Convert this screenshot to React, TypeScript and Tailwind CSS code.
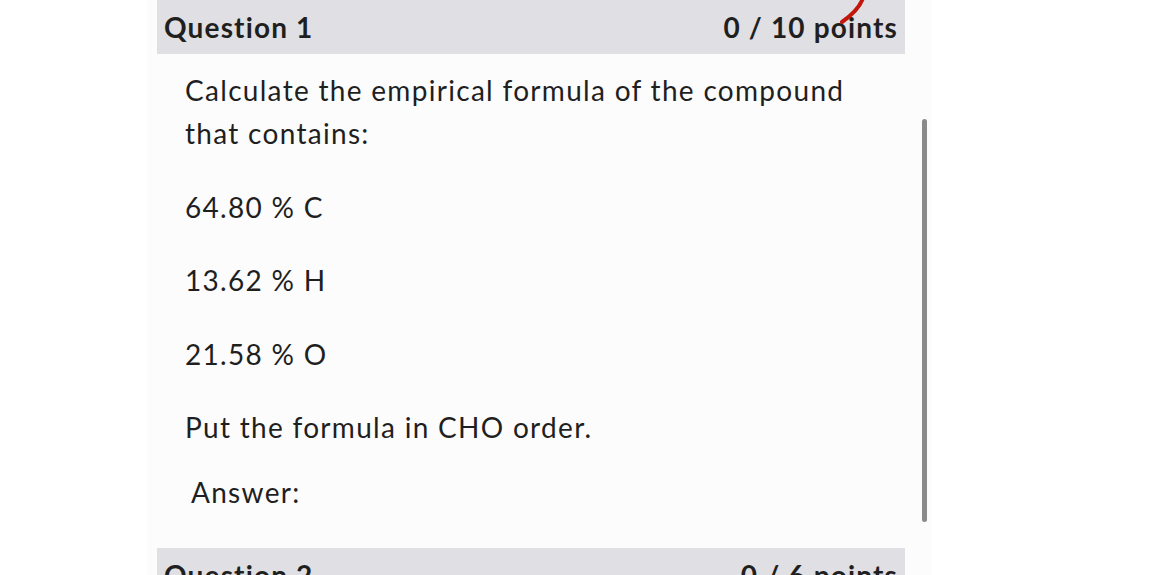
export default function App() {
  return (
    <div
      className="h-[575px] w-[1170px] overflow-hidden bg-white text-[#1f1f1f]"
      style={{ fontFamily: 'Lato, "Open Sans", sans-serif' }}
    >
      <div className="relative ml-[147px] h-full w-[785px] bg-[#fcfcfc]">
        {/* Question 1 header */}
        <div className="ml-[10px] flex h-[54px] w-[748px] items-center justify-between bg-[#e0dfe3] px-[7px] text-[28px] font-bold tracking-[1.15px]">
          <span>Question 1</span>
          <span>0 / 10 points</span>
        </div>

        {/* Body */}
        <div className="pl-[38px] pt-[15px] text-[28px] leading-[43.4px] tracking-[1.3px]">
          <p className="mb-[30px] w-[690px]">
            Calculate the empirical formula of the compound that contains:
          </p>
          <p className="mb-[30px]">64.80 % C</p>
          <p className="mb-[30px]">13.62 % H</p>
          <p className="mb-[30px]">21.58 % O</p>
          <p>Put the formula in CHO order.</p>
          <div className="mt-[22px] pl-[6px]">Answer:</div>
        </div>

        {/* Question 2 header */}
        <div className="ml-[10px] mt-[33px] flex h-[54px] w-[748px] items-center justify-between bg-[#e0dfe3] px-[7px] text-[28px] font-bold tracking-[1.15px]">
          <span>Question 2</span>
          <span>0 / 6 points</span>
        </div>

        {/* scrollbar */}
        <div className="absolute left-[775px] top-[119px] h-[403px] w-[5px] rounded-full bg-[#8a8a8a]" />

        {/* red pen mark */}
        <svg className="absolute left-[690px] top-0" width="30" height="30" viewBox="0 0 30 30">
          <path d="M26 -2 Q22 10 5 22" stroke="#c4170c" strokeWidth="4" fill="none" strokeLinecap="round" />
        </svg>
      </div>
    </div>
  );
}
